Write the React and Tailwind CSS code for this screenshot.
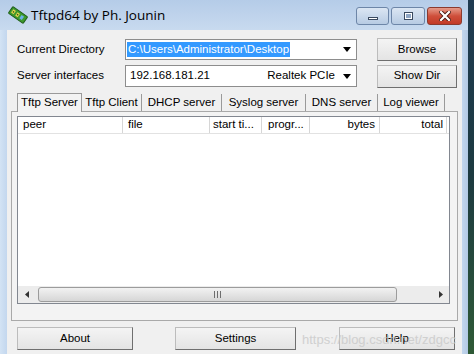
import React from "react";

const tabs = [
  { label: "Tftp Server", w: "w-[65px]", active: true },
  { label: "Tftp Client", w: "w-[60px]" },
  { label: "DHCP server", w: "w-[80px]" },
  { label: "Syslog server", w: "w-[84px]" },
  { label: "DNS server", w: "w-[72px]" },
  { label: "Log viewer", w: "w-[67px]" },
];

const columns = [
  { label: "peer", w: "w-[105px]", cls: "justify-start pl-[5px]" },
  { label: "file", w: "w-[87px]", cls: "justify-start pl-[5px]" },
  { label: "start ti...", w: "w-[52px]", cls: "justify-start pl-[3px]" },
  { label: "progr...", w: "w-[48px]", cls: "justify-start pl-[6px]" },
  { label: "bytes", w: "w-[70px]", cls: "justify-end pr-[4px]" },
  { label: "total", w: "w-[67px]", cls: "justify-end pr-[3px]" },
];

function AppIcon() {
  return (
    <svg width="20" height="18" viewBox="0 0 20 18">
      <g transform="rotate(35 10 9)">
        <rect x="1" y="5" width="18" height="8" rx="1" fill="#3d9a2e" stroke="#1f5e17" strokeWidth="1" />
        <rect x="3" y="7" width="3" height="4" fill="#e8d34a" />
        <rect x="8" y="7" width="3" height="4" fill="#e8d34a" />
        <rect x="13" y="7" width="3" height="4" fill="#6bb0e8" />
        <circle cx="4.5" cy="9" r="0.8" fill="#2a5f1c" />
        <circle cx="9.5" cy="9" r="0.8" fill="#2a5f1c" />
      </g>
    </svg>
  );
}

function Arrow() {
  return (
    <div className="w-[18px] h-full flex items-center justify-center">
      <svg width="8" height="5" viewBox="0 0 8 5">
        <path d="M0 0 L8 0 L4 5 Z" fill="#000" />
      </svg>
    </div>
  );
}

function Button({ children, w }) {
  return (
    <div
      className={`${w} h-[23px] flex items-center justify-center border border-[#bcbcbc] border-r-[#6f6f6f] border-b-[#6f6f6f] bg-gradient-to-b from-[#f4f4f4] to-[#e4e4e4] text-black`}
    >
      {children}
    </div>
  );
}

export default function App() {
  return (
    <div className="w-[474px] h-[354px] overflow-hidden flex bg-[#f0f0f0] font-['Liberation_Sans',Arial,sans-serif] text-[11.5px] text-black relative">
      {/* window */}
      <div className="w-[468px] h-full flex flex-col">
        {/* title bar */}
        <div className="h-[30px] shrink-0 flex items-center bg-gradient-to-b from-[#b5cce8] to-[#c8daef] pl-[8px]">
          <AppIcon />
          <span className="ml-[3px] font-['Open_Sans',sans-serif] text-[13.5px] text-black">
            Tftpd64 by Ph. Jounin
          </span>
          <div className="ml-auto mr-[6px] flex gap-[2px] self-start mt-[7px]">
            <div className="w-[33px] h-[18px] rounded-[3px] border border-[#6d86a8] bg-gradient-to-b from-[#dbe6f3] to-[#b7cbe3] flex items-end justify-center pb-[4px]">
              <div className="w-[10px] h-[3px] bg-white border border-[#3a4a60]" />
            </div>
            <div className="w-[34px] h-[18px] rounded-[3px] border border-[#6d86a8] bg-gradient-to-b from-[#dbe6f3] to-[#b7cbe3] flex items-center justify-center">
              <div className="w-[9px] h-[8px] bg-white border border-[#3a4a60] p-[1px]">
                <div className="w-full h-full bg-[#8fa6c4]" />
              </div>
            </div>
            <div className="w-[35px] h-[18px] rounded-[3px] border border-[#8b3a2e] bg-gradient-to-b from-[#e49a8a] via-[#cf4f3b] to-[#c23a26] flex items-center justify-center">
              <svg width="12" height="10" viewBox="0 0 12 10">
                <path d="M2 1 L10 9 M10 1 L2 9" stroke="#4a1a12" strokeWidth="4" strokeLinecap="square" />
                <path d="M2 1 L10 9 M10 1 L2 9" stroke="#fff" strokeWidth="2.2" strokeLinecap="square" />
              </svg>
            </div>
          </div>
        </div>

        {/* body */}
        <div className="flex-1 flex">
          <div className="w-[7px] bg-gradient-to-r from-[#d3e3f4] to-[#c3d7ee]" />
          <div className="w-[455px] bg-[#f0f0f0] flex flex-col pt-[8px]">
            {/* row 1 */}
            <div className="flex items-center pl-[10px] h-[23px]">
              <div className="w-[108px]">Current Directory</div>
              <div className="w-[232px] h-[21px] bg-white border border-[#8d8d8d] flex items-center pl-[1px]">
                <div className="flex-1 flex items-center">
                  <span className="bg-[#3399ff] text-white h-[15px] leading-[15px] px-[1px]">
                    C:\Users\Administrator\Desktop
                  </span>
                </div>
                <Arrow />
              </div>
              <div className="w-[20px]" />
              <Button w="w-[80px]">Browse</Button>
            </div>
            {/* row 2 */}
            <div className="flex items-center pl-[10px] h-[24px] mt-[3px]">
              <div className="w-[108px]">Server interfaces</div>
              <div className="w-[232px] h-[22px] bg-white border border-[#8d8d8d] flex items-center pl-[4px]">
                <span>192.168.181.21</span>
                <span className="ml-auto pr-[3px]">Realtek PCIe</span>
                <Arrow />
              </div>
              <div className="w-[20px]" />
              <Button w="w-[80px]">Show Dir</Button>
            </div>

            {/* tab control */}
            <div className="ml-[4px] w-[447px] mt-[4px] flex flex-col">
              <div className="h-[19px] flex items-end pl-[6px]">
                {tabs.map((t) =>
                  t.active ? (
                    <div
                      key={t.label}
                      className={`${t.w} h-[19px] flex items-center justify-center border border-b-0 border-[#9a9a9a] bg-[#f3f3f3] relative z-10 -mb-px`}
                    >
                      {t.label}
                    </div>
                  ) : (
                    <div
                      key={t.label}
                      className={`${t.w} h-[17px] flex items-center justify-center border-r border-[#9a9a9a] bg-[#f0f0f0]`}
                    >
                      {t.label}
                    </div>
                  )
                )}
              </div>
              <div className="h-[210px] border border-[#a9a9a9] bg-[#f3f3f3] pt-[4px] pl-[5px]">
                {/* list view */}
                <div className="w-[433px] h-[188px] border border-[#828790] bg-white flex flex-col">
                  <div className="h-[17px] flex border-b border-[#e2e2e2]">
                    {columns.map((c) => (
                      <div
                        key={c.label}
                        className={`${c.w} ${c.cls} h-full flex items-center border-r border-[#d6d6d6]`}
                      >
                        {c.label}
                      </div>
                    ))}
                  </div>
                  <div className="flex-1" />
                  {/* horizontal scrollbar */}
                  <div className="h-[17px] flex items-center bg-[#ececec]">
                    <div className="w-[17px] h-full flex items-center justify-center">
                      <svg width="4" height="7" viewBox="0 0 4 7">
                        <path d="M4 0 L4 7 L0 3.5 Z" fill="#333" />
                      </svg>
                    </div>
                    <div className="ml-[3px] w-[359px] h-[15px] rounded-[3px] border border-[#9c9c9c] bg-gradient-to-b from-[#f2f2f2] to-[#d6d6d6] flex items-center justify-center">
                      <div className="flex gap-[2px]">
                        <div className="w-px h-[7px] bg-[#6e6e6e]" />
                        <div className="w-px h-[7px] bg-[#6e6e6e]" />
                        <div className="w-px h-[7px] bg-[#6e6e6e]" />
                      </div>
                    </div>
                    <div className="flex-1" />
                    <div className="w-[17px] h-full flex items-center justify-center">
                      <svg width="4" height="7" viewBox="0 0 4 7">
                        <path d="M0 0 L0 7 L4 3.5 Z" fill="#333" />
                      </svg>
                    </div>
                  </div>
                </div>
              </div>
            </div>

            {/* bottom buttons */}
            <div className="flex pl-[10px] mt-[6px]">
              <Button w="w-[116px]">About</Button>
              <div className="w-[42px]" />
              <Button w="w-[121px]">Settings</Button>
              <div className="w-[43px]" />
              <Button w="w-[116px]">Help</Button>
            </div>
          </div>
          <div className="w-[6px] bg-gradient-to-r from-[#c3d7ee] to-[#b3c9e4]" />
        </div>
      </div>
      {/* desktop strip */}
      <div className="w-[6px] h-full bg-gradient-to-b from-[#1f3b52] via-[#1d3a40] to-[#2f5a36]" />

      {/* watermark */}
      <div className="absolute left-[302px] top-[330px] text-[13px] text-[#c9c9c9] opacity-80 whitespace-nowrap pointer-events-none">
        https://blog.csdn.net/zdgcc
      </div>
    </div>
  );
}
